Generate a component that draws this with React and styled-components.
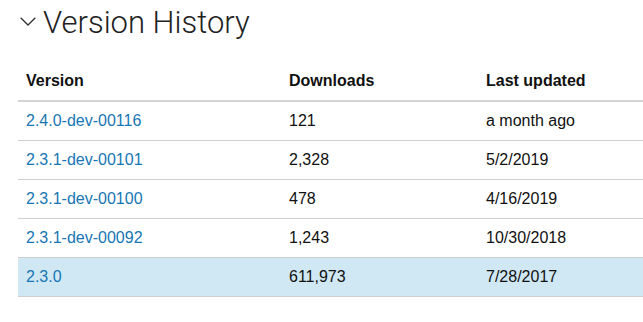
import React from 'react'
import styled, { createGlobalStyle } from 'styled-components'

const GlobalStyle = createGlobalStyle`
  body {
    margin: 0;
    background: #fff;
    font-family: "Liberation Sans", Arial, sans-serif;
    overflow: hidden;
  }
`;

const versions = [
  { version: '2.4.0-dev-00116', downloads: '121', updated: 'a month ago' },
  { version: '2.3.1-dev-00101', downloads: '2,328', updated: '5/2/2019' },
  { version: '2.3.1-dev-00100', downloads: '478', updated: '4/16/2019' },
  { version: '2.3.1-dev-00092', downloads: '1,243', updated: '10/30/2018' },
  { version: '2.3.0', downloads: '611,973', updated: '7/28/2017', current: true },
];

export default function App() {
  return (
    <>
      <GlobalStyle />
      <Section>
        <Heading>
          <Chevron viewBox="0 0 16 9">
            <path d="M0.7 0.7 L8 8 L15.3 0.7" />
          </Chevron>
          <Title>Version History</Title>
        </Heading>
        <Table>
          <colgroup>
            <col width="263" />
            <col width="197" />
            <col />
          </colgroup>
          <thead>
            <tr>
              <Th>Version</Th>
              <Th>Downloads</Th>
              <Th>Last updated</Th>
            </tr>
          </thead>
          <tbody>
            {versions.map(v => (
              <Row key={v.version} current={v.current}>
                <Td><VersionLink href="#">{v.version}</VersionLink></Td>
                <Td>{v.downloads}</Td>
                <Td>{v.updated}</Td>
              </Row>
            ))}
          </tbody>
        </Table>
      </Section>
    </>
  )
}

const Section = styled.div`
  padding: 0 0 0 18px;
`;

const Heading = styled.div`
  display: flex;
  align-items: center;
  gap: 7px;
  height: 44px;
  padding-left: 2px;
  margin-bottom: 18px;
`;

const Chevron = styled.svg`
  width: 16px;
  height: 9px;
  margin-top: -1px;
  fill: none;
  stroke: #333;
  stroke-width: 1.3;
`;

const Title = styled.h2`
  margin: 0;
  font-family: Roboto, "Liberation Sans", sans-serif;
  font-weight: 300;
  font-size: 31px;
  color: #222;
  letter-spacing: 0;
`;

const Table = styled.table`
  width: 100%;
  table-layout: fixed;
  border-collapse: collapse;
  font-size: 16px;
  color: #111;
`;

const Th = styled.th`
  height: 38px;
  padding: 0 8px;
  text-align: left;
  font-weight: bold;
  border-bottom: 2px solid #d4d4d4;
`;

const Row = styled.tr`
  background: ${p => (p.current ? '#cfe8f3' : 'transparent')};
  border-bottom: 1px solid #cfcfcf;
`;

const Td = styled.td`
  height: 38px;
  padding: 0 8px;
  vertical-align: middle;
`;

const VersionLink = styled.a`
  color: #1776b3;
  text-decoration: none;
`;
